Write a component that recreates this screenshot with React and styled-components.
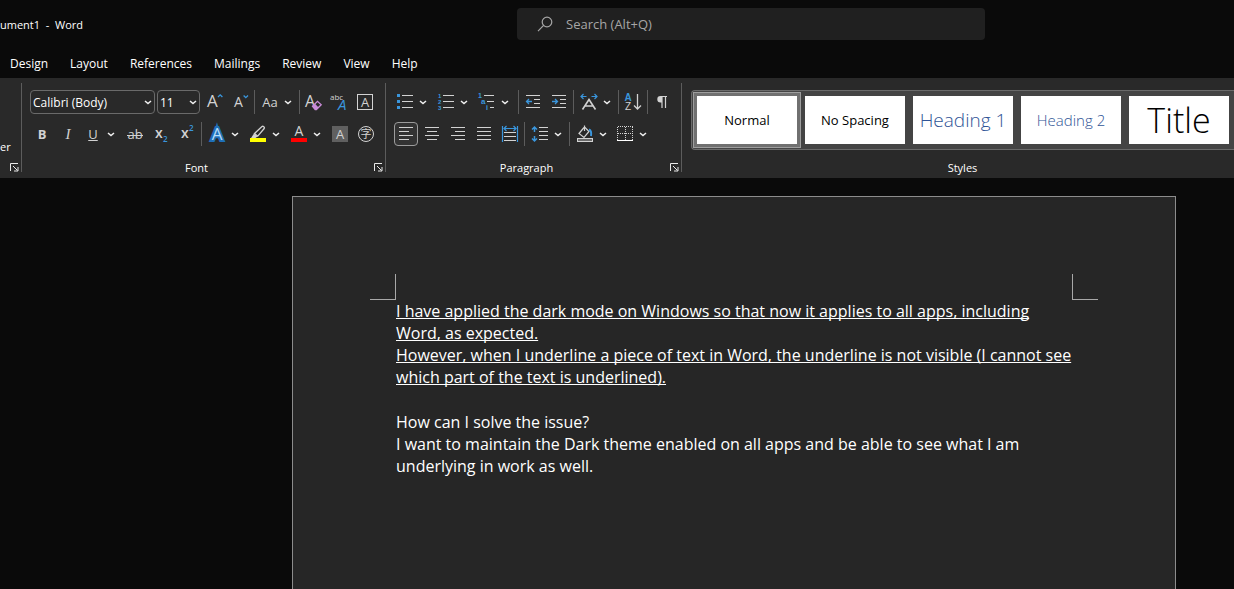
import styled, { createGlobalStyle, css } from "styled-components";

const ICON = "#d2d2d2";
const BLUE = "#3a96dd";

const GlobalStyle = createGlobalStyle`
  * {
    box-sizing: border-box;
  }

  body {
    margin: 0;
    background: #0a0a0a;
    color: #fff;
    font-family: "Open Sans", "Noto Sans CJK SC", sans-serif;
  }

  button, input, select {
    font-family: inherit;
  }
`;

const Window = styled.div`
  display: flex;
  flex-direction: column;
  height: 100vh;
  overflow: hidden;
`;

const TitleBar = styled.header`
  display: grid;
  grid-template-columns: 517fr 468fr 249fr;
  align-items: center;
  height: 48px;
`;

const DocumentName = styled.div`
  font-size: 11px;
  white-space: pre;
`;

const SearchBox = styled.label`
  display: flex;
  align-items: center;
  gap: 12px;
  height: 32px;
  padding-left: 20px;
  border-radius: 4px;
  background: #202020;
`;

const SearchInput = styled.input`
  flex: 1;
  min-width: 0;
  padding: 0;
  border: 0;
  outline: 0;
  background: transparent;
  color: #fff;
  font-size: 13px;

  &::placeholder {
    color: #a6a6a6;
    opacity: 1;
  }
`;

const Tabs = styled.nav`
  display: flex;
  align-items: center;
  gap: 22px;
  height: 30px;
  padding-left: 10px;
`;

const Tab = styled.button`
  padding: 0;
  border: 0;
  background: none;
  color: #fff;
  font-size: 12px;
`;

const Ribbon = styled.div`
  display: flex;
  height: 100px;
  background: #292929;
`;

const Divider = styled.div`
  flex: none;
  width: 1px;
  margin: 5px 0 6px;
  background: #5c5c5c;
`;

const Group = styled.section`
  display: flex;
  flex-direction: column;
  flex: ${({ $width }) => ($width ? `0 0 ${$width}px` : "1 1 0")};
  min-width: 0;
  padding-top: 12px;
`;

const Rows = styled.div`
  display: flex;
  flex-direction: column;
  gap: 8px;
  height: 68px;
  padding-left: 7px;
`;

const Row = styled.div`
  display: flex;
  align-items: center;
  height: 24px;
`;

const GroupFooter = styled.div`
  display: flex;
  align-items: center;
  height: 19px;
`;

const GroupName = styled.div`
  flex: 1;
  text-align: center;
  font-size: 11px;
  line-height: 16px;
`;

const Launcher = styled.button`
  display: flex;
  justify-content: flex-end;
  flex: none;
  width: 12px;
  margin-right: 2px;
  padding: 0;
  border: 0;
  background: none;
`;

const PainterLabel = styled.div`
  height: 68px;
  padding-top: 49px;
  font-size: 11px;
`;

const Separator = styled.div`
  flex: none;
  width: 1px;
  height: 24px;
  margin: 0 ${({ $after = 1 }) => $after}px 0 ${({ $before = 1 }) => $before}px;
  background: #5c5c5c;
`;

const Tool = styled.button`
  display: flex;
  align-items: center;
  justify-content: center;
  flex: none;
  width: ${({ $width = 26 }) => $width}px;
  height: 24px;
  padding: 0;
  border: 0;
  border-radius: 4px;
  background: none;
  color: ${ICON};

  ${({ $active }) =>
    $active &&
    css`
      width: 24px;
      margin: 0 1px;
      border: 1px solid #9c9c9c;
      background: #333;
    `}
`;

const Arrow = styled(Tool).attrs({ "aria-label": "More options" })`
  width: 12px;
`;

const Split = styled.div`
  display: flex;
  flex: none;
  width: ${({ $width = 41 }) => $width}px;
`;

const Letter = styled.span`
  font-size: 13px;
  line-height: 16px;
  font-weight: ${({ $bold }) => ($bold ? 700 : 400)};
  ${({ $italic }) =>
    $italic &&
    css`
      font-family: "Liberation Serif", serif;
      font-size: 15px;
      font-style: italic;
    `}
`;

const Combo = styled.div`
  display: grid;
  flex: none;
  align-items: center;
  width: ${({ $width }) => $width}px;
  margin: 0 1px;

  > * {
    grid-area: 1 / 1;
  }

  > svg {
    justify-self: end;
    margin-right: 2px;
    pointer-events: none;
  }
`;

const Select = styled.select`
  width: 100%;
  height: 24px;
  padding: 0 0 0 2px;
  border: 1px solid #6a6a6a;
  border-radius: 4px;
  appearance: none;
  background: #292929;
  color: #fff;
  font-size: 12px;
`;

const Gallery = styled.div`
  display: flex;
  height: 60px;
  margin: 0 0 8px 9px;
  padding: 1px;
  overflow: hidden;
  border: 1px solid #6a6a6a;
  border-right: 0;
  border-radius: 4px 0 0 4px;
  background: #444;
`;

const StyleTile = styled.button`
  flex: none;
  width: 108px;
  height: 56px;
  padding: 3px;
  border: 1px solid ${({ $selected }) => ($selected ? "#9e9e9e" : "#444")};
  background: ${({ $selected }) => ($selected ? "#707070" : "#444")};
`;

const Preview = styled.span`
  display: flex;
  align-items: center;
  justify-content: center;
  height: 48px;
  overflow: hidden;
  background: #fff;
  color: ${({ $color = "#000" }) => $color};
  font-size: ${({ $size = 13 }) => $size}px;
  font-weight: ${({ $light }) => ($light ? 300 : 400)};
  line-height: 48px;
  white-space: nowrap;
`;

const StylesName = styled(GroupName)`
  padding-left: 9px;
`;

const Workspace = styled.main`
  display: flex;
  flex: 1;
  min-height: 0;
  padding: 18px 58px 0 292px;
`;

const Page = styled.article`
  flex: 1;
  padding: 77px 77px 0;
  border: 1px solid #8c8c8c;
  border-bottom: 0;
  background: #262626;
`;

const Margins = styled.div`
  display: flex;
  justify-content: space-between;
`;

const Corner = styled.div`
  width: 26px;
  height: 26px;
  border: solid #a8a8a8;
  border-width: ${({ $right }) => ($right ? "0 0 1px 1px" : "0 1px 1px 0")};
`;

const Body = styled.div`
  padding-left: 26px;
  font-size: 16px;
  line-height: 22px;
  white-space: nowrap;
`;

const Paragraph = styled.p`
  margin: ${({ $spaced }) => ($spaced ? 23 : 0)}px 0 0;
  text-decoration: ${({ $underlined }) => ($underlined ? "underline" : "none")};
  text-decoration-skip-ink: none;
`;

const IconFrame = styled.svg`
  flex: none;
  overflow: visible;
  font-family: "Open Sans", sans-serif;
`;

const Icon = ({ children }) => (
  <IconFrame width="20" height="20" viewBox="0 0 20 20" fill="none" stroke={ICON} aria-hidden="true">
    {children}
  </IconFrame>
);

const Glyph = ({ children, color = ICON, ...rest }) => (
  <text fill={color} stroke="none" {...rest}>
    {children}
  </text>
);

const Chevron = () => (
  <svg width="10" height="10" viewBox="0 0 10 10" fill="none" stroke="#f0f0f0" strokeWidth="1.5" aria-hidden="true">
    <path d="M2 4l3 2.600L8 4" />
  </svg>
);

const SearchIcon = () => (
  <svg width="17" height="17" viewBox="0 0 17 17" fill="none" stroke="#a6a6a6" strokeWidth="1.2" aria-hidden="true">
    <circle cx="10" cy="6" r="4.8" />
    <path d="M6.6 9.4L1 15.2" />
  </svg>
);

const LauncherIcon = () => (
  <svg width="9" height="9" viewBox="0 0 9 9" fill="none" stroke="#e8e8e8" aria-hidden="true">
    <path d="M.5 8V.5H8M3 3l4.5 4.5M8 4v4H4" />
  </svg>
);

const Lines = ({ rows }) => (
  <path shapeRendering="crispEdges" d={rows.map(([x, y, w]) => `M${x} ${y}.5h${w}`).join("")} />
);

const icons = {
  grow: (
    <Icon>
      <Glyph x="3" y="15" fontSize="17">A</Glyph>
      <path d="M14 5l2.2-2.2L18.4 5" stroke={BLUE} strokeWidth="1.3" />
    </Icon>
  ),
  shrink: (
    <Icon>
      <Glyph x="4" y="15" fontSize="14">A</Glyph>
      <path d="M13.6 3.5l2.2 2.200L18 3.500" stroke={BLUE} strokeWidth="1.3" />
    </Icon>
  ),
  clear: (
    <Icon>
      <Glyph x="2" y="15" fontSize="16">A</Glyph>
      <path d="M9.500 14.300l5-5 3.700 3.500-4.800 4.700h-1.200z" stroke="#c98bd8" fill="#292929" strokeWidth="1.3" />
      <path d="M9.500 14.300l2.500-2.500 3.600 3.600-2.200 2.100h-1.200z" fill="#c98bd8" stroke="none" />
    </Icon>
  ),
  phonetic: (
    <Icon>
      <Glyph x="1" y="8" fontSize="8">abc</Glyph>
      <Glyph x="9" y="18" fontSize="15" fontStyle="italic" color={BLUE}>A</Glyph>
    </Icon>
  ),
  border: (
    <Icon>
      <rect x="2.5" y="2.5" width="15" height="15" />
      <Glyph x="10" y="15" fontSize="13" textAnchor="middle">A</Glyph>
    </Icon>
  ),
  strike: (
    <Icon>
      <Glyph x="10" y="15" fontSize="13" textAnchor="middle">ab</Glyph>
      <Lines rows={[[2, 11, 16]]} />
    </Icon>
  ),
  sub: (
    <Icon>
      <Glyph x="4" y="14" fontSize="14" fontWeight="600">x</Glyph>
      <Glyph x="12" y="18" fontSize="8" fontWeight="600" color={BLUE}>2</Glyph>
    </Icon>
  ),
  sup: (
    <Icon>
      <Glyph x="4" y="14" fontSize="14" fontWeight="600">x</Glyph>
      <Glyph x="12" y="7" fontSize="8" fontWeight="600" color={BLUE}>2</Glyph>
    </Icon>
  ),
  effects: (
    <Icon>
      <text x="10" y="16" fontSize="17" textAnchor="middle" stroke="#1f6fb8" strokeWidth="4" paintOrder="stroke" fill="#b4dcfa">A</text>
    </Icon>
  ),
  highlight: (
    <Icon>
      <path d="M6.5 9.5l7.500-7c1-.8 3 .8 2.200 2l-6.500 7.700z" strokeWidth="1.3" />
      <path d="M6 9.5l3.500 3-2 1.500H3z" fill={ICON} stroke="none" />
      <path d="M2 14h16v4H2z" fill="#ffff00" stroke="none" />
    </Icon>
  ),
  color: (
    <Icon>
      <Glyph x="10" y="12" fontSize="14" textAnchor="middle">A</Glyph>
      <path d="M2 14h16v4H2z" fill="#ff0000" stroke="none" />
    </Icon>
  ),
  shade: (
    <Icon>
      <path d="M2 2h16v16H2z" fill="#606060" stroke="none" />
      <Glyph x="10" y="15" fontSize="13" textAnchor="middle">A</Glyph>
    </Icon>
  ),
  enclose: (
    <Icon>
      <circle cx="10" cy="10" r="7.5" />
      <Glyph x="10" y="14" fontSize="11" textAnchor="middle" fontFamily="Noto Sans CJK SC">字</Glyph>
    </Icon>
  ),
  bullets: (
    <Icon>
      <path d="M2 2h3v3H2zM2 8h3v3H2zM2 14h3v3H2z" fill={BLUE} stroke="none" />
      <Lines rows={[[7, 3, 11], [7, 9, 11], [7, 15, 11]]} />
    </Icon>
  ),
  numbers: (
    <Icon>
      {[1, 2, 3].map((n) => (
        <Glyph key={n} x="2" y={n * 6} fontSize="6" fontWeight="700" fontFamily="Liberation Sans" color={BLUE}>{n}</Glyph>
      ))}
      <Lines rows={[[7, 3, 11], [7, 9, 11], [7, 15, 11]]} />
    </Icon>
  ),
  multilevel: (
    <Icon>
      <Glyph x="1" y="6" fontSize="7" fontWeight="700" fontFamily="Liberation Sans" color={BLUE}>1</Glyph>
      <Glyph x="4" y="12" fontSize="8" fontWeight="700" fontFamily="Liberation Sans" color={BLUE}>a</Glyph>
      <Glyph x="9" y="18" fontSize="7" fontWeight="700" fontFamily="Liberation Sans" color={BLUE}>i</Glyph>
      <Lines rows={[[7, 3, 10], [10, 9, 7], [13, 15, 4]]} />
    </Icon>
  ),
  outdent: (
    <Icon>
      <Lines rows={[[3, 3, 14], [11, 7, 6], [11, 11, 6], [3, 15, 14]]} />
      <path d="M9 9.500H3.500M6 7L3.500 9.500 6 12" stroke={BLUE} strokeWidth="1.3" />
    </Icon>
  ),
  indent: (
    <Icon>
      <Lines rows={[[3, 3, 14], [11, 7, 6], [11, 11, 6], [3, 15, 14]]} />
      <path d="M3 9.500h5.500M6 7l2.500 2.500L6 12" stroke={BLUE} strokeWidth="1.3" />
    </Icon>
  ),
  asian: (
    <Icon>
      <path d="M3.500 17.500L10 7.500l6.500 10M6 14h8" strokeWidth="1.6" />
      <path d="M2 4.500h5.500M4.500 2L2 4.500 4.500 7M12.500 4.500H18M15.500 2L18 4.500 15.500 7" stroke={BLUE} strokeWidth="1.2" />
    </Icon>
  ),
  sort: (
    <Icon>
      <Glyph x="5" y="9" fontSize="10" fontWeight="700" fontFamily="Liberation Sans" textAnchor="middle" color={BLUE}>A</Glyph>
      <Glyph x="5" y="18" fontSize="10" fontFamily="Liberation Sans" textAnchor="middle">Z</Glyph>
      <path d="M14.500 2v15M11 13.500l3.500 3.500 3.500-3.500" strokeWidth="1.3" />
    </Icon>
  ),
  pilcrow: (
    <Icon>
      <path d="M10 4.500h5M10 4v12M13.500 4v12" strokeWidth="1.2" />
      <path d="M10 4H8.500a3.200 3.200 0 000 6.400H10z" fill={ICON} stroke="none" />
    </Icon>
  ),
  left: (
    <Icon>
      <Lines rows={[[3, 3, 14], [3, 7, 10], [3, 11, 14], [3, 15, 10]]} />
    </Icon>
  ),
  center: (
    <Icon>
      <Lines rows={[[3, 3, 14], [5, 7, 10], [3, 11, 14], [5, 15, 10]]} />
    </Icon>
  ),
  right: (
    <Icon>
      <Lines rows={[[3, 3, 14], [7, 7, 10], [3, 11, 14], [7, 15, 10]]} />
    </Icon>
  ),
  justify: (
    <Icon>
      <Lines rows={[[3, 3, 14], [3, 7, 14], [3, 11, 14], [3, 15, 14]]} />
    </Icon>
  ),
  distribute: (
    <Icon>
      <path d="M2.500 2v16M17.500 2v16M4 4.500h12M6.500 2l-2.500 2.500L6.500 7M13.500 2L16 4.500 13.500 7" stroke={BLUE} strokeWidth="1.2" />
      <Lines rows={[[4, 8, 12], [4, 12, 12], [4, 16, 12]]} />
    </Icon>
  ),
  spacing: (
    <Icon>
      <path d="M4.500 3v5M4.500 12v5M2 5.500L4.500 3 7 5.500M2 14.500L4.500 17 7 14.500" stroke={BLUE} strokeWidth="1.500" />
      <Lines rows={[[9, 3, 9], [9, 7, 9], [9, 11, 9], [9, 15, 9]]} />
    </Icon>
  ),
  fill: (
    <Icon>
      <path d="M9 3.500L4 9.500l5 4 5-6-4.500-4.500V1.500M9.500 3v4" strokeWidth="1.2" />
      <path d="M14 5.500c2.500 1 2.500 3.500 2 6.500" stroke={BLUE} strokeWidth="2" />
      <rect x="2.500" y="14.500" width="15" height="3" fill="#6a6a6a" />
    </Icon>
  ),
  borders: (
    <Icon>
      <path
        d="M3 2.500h15M3 9.500h15M2.500 3v13M10.500 3v13M17.500 3v13"
        strokeDasharray="1 1"
        shapeRendering="crispEdges"
      />
      <path d="M2 16.500h16" stroke="#fff" shapeRendering="crispEdges" />
    </Icon>
  ),
};

const SplitTool = ({ label, icon, iconWidth = 24, width }) => (
  <Split $width={width}>
    <Tool $width={iconWidth} aria-label={label}>{icon}</Tool>
    <Arrow><Chevron /></Arrow>
  </Split>
);

const tabs = ["Design", "Layout", "References", "Mailings", "Review", "View", "Help"];

const styles = [
  { name: "Normal", selected: true },
  { name: "No Spacing" },
  { name: "Heading 1", size: 19, color: "#2f5496", light: true },
  { name: "Heading 2", size: 15, color: "#2f5496", light: true },
  { name: "Title", size: 34, light: true },
];

const FontGroup = () => (
  <Group $width={363} aria-label="Font">
    <Rows>
      <Row>
        <Combo $width={125}>
          <Select aria-label="Font name">
            <option>Calibri (Body)</option>
          </Select>
          <Chevron />
        </Combo>
        <Combo $width={43}>
          <Select aria-label="Font size">
            <option>11</option>
          </Select>
          <Chevron />
        </Combo>
        <Tool aria-label="Increase font size">{icons.grow}</Tool>
        <Tool aria-label="Decrease font size">{icons.shrink}</Tool>
        <Separator $after={3} />
        <SplitTool label="Change case" icon={<Letter>Aa</Letter>} />
        <Separator $before={0} $after={0} />
        <Tool aria-label="Clear formatting">{icons.clear}</Tool>
        <Tool aria-label="Phonetic guide">{icons.phonetic}</Tool>
        <Tool aria-label="Character border">{icons.border}</Tool>
      </Row>
      <Row>
        <Tool aria-label="Bold"><Letter $bold>B</Letter></Tool>
        <Tool aria-label="Italic"><Letter $italic>I</Letter></Tool>
        <SplitTool label="Underline" icon={<Letter as="u">U</Letter>} />
        <Tool aria-label="Strikethrough">{icons.strike}</Tool>
        <Tool aria-label="Subscript">{icons.sub}</Tool>
        <Tool aria-label="Superscript">{icons.sup}</Tool>
        <Separator $after={3} />
        <SplitTool label="Text effects" icon={icons.effects} />
        <SplitTool label="Highlight" icon={icons.highlight} />
        <SplitTool label="Font color" icon={icons.color} width={40} />
        <Tool aria-label="Character shading">{icons.shade}</Tool>
        <Tool aria-label="Enclose characters">{icons.enclose}</Tool>
      </Row>
    </Rows>
    <GroupFooter>
      <GroupName>Font</GroupName>
      <Launcher aria-label="Font settings"><LauncherIcon /></Launcher>
    </GroupFooter>
  </Group>
);

const ParagraphGroup = () => (
  <Group $width={295} aria-label="Paragraph">
    <Rows>
      <Row>
        <SplitTool label="Bullets" icon={icons.bullets} />
        <SplitTool label="Numbering" icon={icons.numbers} />
        <SplitTool label="Multilevel list" icon={icons.multilevel} width={42} />
        <Separator />
        <Tool aria-label="Decrease indent">{icons.outdent}</Tool>
        <Tool aria-label="Increase indent">{icons.indent}</Tool>
        <Separator $after={3} />
        <SplitTool label="Asian layout" icon={icons.asian} />
        <Separator $before={0} />
        <Tool aria-label="Sort">{icons.sort}</Tool>
        <Separator />
        <Tool aria-label="Show marks">{icons.pilcrow}</Tool>
      </Row>
      <Row>
        <Tool aria-label="Align left" $active>{icons.left}</Tool>
        <Tool aria-label="Center">{icons.center}</Tool>
        <Tool aria-label="Align right">{icons.right}</Tool>
        <Tool aria-label="Justify">{icons.justify}</Tool>
        <Tool aria-label="Distribute">{icons.distribute}</Tool>
        <Separator $after={3} />
        <SplitTool label="Line spacing" icon={icons.spacing} />
        <Separator $before={0} $after={3} />
        <SplitTool label="Shading" icon={icons.fill} width={40} />
        <SplitTool label="Borders" icon={icons.borders} />
      </Row>
    </Rows>
    <GroupFooter>
      <GroupName>Paragraph</GroupName>
      <Launcher aria-label="Paragraph settings"><LauncherIcon /></Launcher>
    </GroupFooter>
  </Group>
);

const StylesGroup = () => (
  <Group aria-label="Styles">
    <Gallery>
      {styles.map(({ name, selected, size, color, light }) => (
        <StyleTile key={name} $selected={selected}>
          <Preview $size={size} $color={color} $light={light}>{name}</Preview>
        </StyleTile>
      ))}
    </Gallery>
    <GroupFooter>
      <StylesName>Styles</StylesName>
    </GroupFooter>
  </Group>
);

const App = () => (
  <Window>
    <GlobalStyle />
    <TitleBar>
      <DocumentName>{"ument1  -  Word"}</DocumentName>
      <SearchBox>
        <SearchIcon />
        <SearchInput placeholder="Search (Alt+Q)" aria-label="Search" />
      </SearchBox>
    </TitleBar>
    <Tabs>
      {tabs.map((tab) => (
        <Tab key={tab}>{tab}</Tab>
      ))}
    </Tabs>
    <Ribbon>
      <Group $width={21} aria-label="Clipboard">
        <PainterLabel>er</PainterLabel>
        <GroupFooter>
          <GroupName />
          <Launcher aria-label="Clipboard settings"><LauncherIcon /></Launcher>
        </GroupFooter>
      </Group>
      <Divider />
      <FontGroup />
      <Divider />
      <ParagraphGroup />
      <Divider />
      <StylesGroup />
    </Ribbon>
    <Workspace>
      <Page>
        <Margins>
          <Corner />
          <Corner $right />
        </Margins>
        <Body>
          <Paragraph $underlined>
            I have applied the dark mode on Windows so that now it applies to all apps, including
            <br />
            Word, as expected.
          </Paragraph>
          <Paragraph $underlined>
            However, when I underline a piece of text in Word, the underline is not visible (I cannot see
            <br />
            which part of the text is underlined).
          </Paragraph>
          <Paragraph $spaced>
            How can I solve the issue?
            <br />
            I want to maintain the Dark theme enabled on all apps and be able to see what I am
            <br />
            underlying in work as well.
          </Paragraph>
        </Body>
      </Page>
    </Workspace>
  </Window>
);

export default App;
